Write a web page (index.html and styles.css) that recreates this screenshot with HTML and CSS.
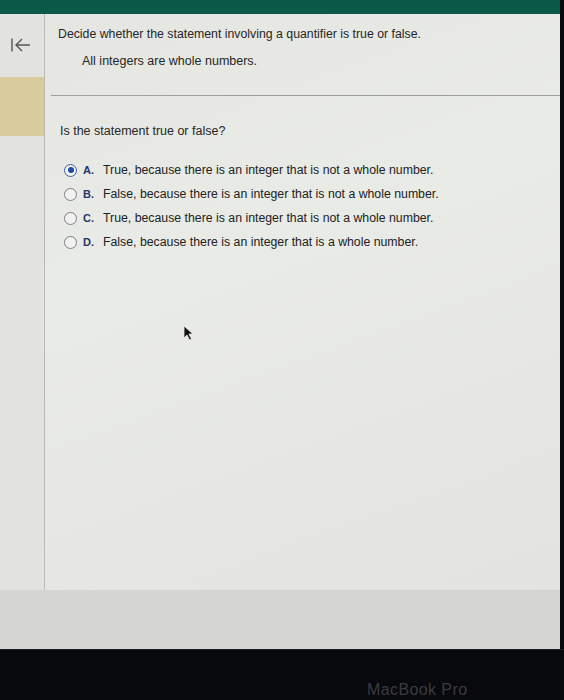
FILE: index.html
```html
<!DOCTYPE html>
<html>
<head>
<meta charset="utf-8">
<link rel="stylesheet" href="styles.css">
</head>
<body>
<div class="screen">
  <div class="topbar"></div>
  <div class="main">
    <aside class="sidebar">
      <div class="back">
        <svg width="22" height="16" viewBox="0 0 22 16"><path d="M2 1.5V14.5M20 8H6M12 2L6 8L12 14" fill="none" stroke="#555" stroke-width="1.4"/></svg>
      </div>
      <div class="tab"></div>
    </aside>
    <section class="content">
      <p class="title">Decide whether the statement involving a quantifier is true or false.</p>
      <p class="statement">All integers are whole numbers.</p>
      <hr class="rule">
      <p class="question">Is the statement true or false?</p>
      <ul class="options">
        <li class="opt"><span class="radio on"></span><span class="letter">A.</span><span>True, because there is an integer that is not a whole number.</span></li>
        <li class="opt"><span class="radio"></span><span class="letter">B.</span><span>False, because there is an integer that is not a whole number.</span></li>
        <li class="opt"><span class="radio"></span><span class="letter">C.</span><span>True, because there is an integer that is not a whole number.</span></li>
        <li class="opt"><span class="radio"></span><span class="letter">D.</span><span>False, because there is an integer that is a whole number.</span></li>
      </ul>
      <svg class="cursor" width="12" height="16" viewBox="0 0 12 16"><path d="M1 1L1 13L4 10L6.5 15L8.5 14L6 9L10 9Z" fill="#111" stroke="#eee" stroke-width="0.8"/></svg>
    </section>
  </div>
  <div class="footer"></div>
</div>
<div class="bezel"><span class="brand">MacBook Pro</span></div>
</body>
</html>
```
FILE: styles.css
```css
html, body {
  margin: 0;
  padding: 0;
  background: #08090c;
  width: 564px;
  height: 700px;
  overflow: hidden;
  font-family: "Liberation Sans", Arial, sans-serif;
}
.screen {
  height: 649px;
  width: 560px;
  display: flex;
  flex-direction: column;
  background: #e4e5e1;
}
.topbar {
  height: 14px;
  background: #0b5a47;
  flex: none;
}
.main {
  flex: 1;
  display: flex;
  background: linear-gradient(160deg, #e5e6e2 0%, #e9ebe6 40%, #e3e4e0 100%);
}
.sidebar {
  width: 44px;
  flex: none;
  border-right: 1px solid #b9bab5;
  background: #e2e3df;
  display: flex;
  flex-direction: column;
}
.back {
  height: 63px;
  padding-left: 10px;
  padding-top: 23px;
  box-sizing: border-box;
}
.tab {
  height: 59px;
  background: #d8cc9d;
}
.content {
  flex: 1;
  position: relative;
  padding-left: 13px;
}
.title {
  margin: 0;
  padding-top: 13px;
  font-size: 12.3px;
  color: #262626;
  line-height: 14px;
}
.statement {
  margin: 13px 0 0 24px;
  font-size: 12.5px;
  color: #262626;
  line-height: 14px;
}
.rule {
  margin: 27px 0 0 -7px;
  border: none;
  border-top: 1px solid #9fa09c;
  height: 0;
}
.question {
  margin: 28px 0 0 2px;
  font-size: 12.5px;
  color: #262626;
  line-height: 14px;
}
.options {
  list-style: none;
  margin: 25px 0 0 0;
  padding: 0 0 0 6px;
  display: flex;
  flex-direction: column;
  gap: 10px;
}
.opt {
  display: flex;
  align-items: center;
  height: 14px;
  font-size: 12.3px;
  color: #222;
}
.radio {
  width: 11px;
  height: 11px;
  border: 1.3px solid #7c7f86;
  border-radius: 50%;
  background: #f2f2f0;
  flex: none;
  position: relative;
}
.radio.on {
  border-color: #3b5fa8;
}
.radio.on::after {
  content: "";
  position: absolute;
  left: 2.5px;
  top: 2.5px;
  width: 6px;
  height: 6px;
  border-radius: 50%;
  background: #1f4aa0;
}
.letter {
  width: 20px;
  margin-left: 6px;
  font-weight: bold;
  color: #24366a;
  font-size: 11px;
}
.cursor {
  position: absolute;
  left: 138px;
  top: 311px;
}
.footer {
  height: 59px;
  flex: none;
  background: #d5d5d1;
}
.bezel {
  position: relative;
  height: 51px;
  border-top: 1px solid #1a1b1e;
}
.brand {
  position: absolute;
  left: 367px;
  top: 31px;
  font-size: 16px;
  color: #3a3b3f;
  letter-spacing: 0.4px;
}
```
